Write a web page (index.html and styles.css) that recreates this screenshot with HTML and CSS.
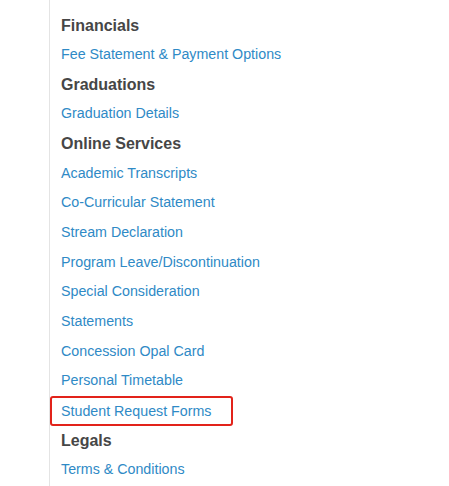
FILE: index.html
```html
<!DOCTYPE html>
<html>
<head>
<meta charset="utf-8">
<link rel="stylesheet" href="styles.css">
</head>
<body>
<div class="page">
  <nav class="sidebar">
    <div class="heading">Financials</div>
    <a class="link">Fee Statement &amp; Payment Options</a>
    <div class="heading">Graduations</div>
    <a class="link">Graduation Details</a>
    <div class="heading">Online Services</div>
    <a class="link">Academic Transcripts</a>
    <a class="link">Co-Curricular Statement</a>
    <a class="link">Stream Declaration</a>
    <a class="link">Program Leave/Discontinuation</a>
    <a class="link">Special Consideration</a>
    <a class="link">Statements</a>
    <a class="link">Concession Opal Card</a>
    <a class="link">Personal Timetable</a>
    <a class="link highlighted"><span class="box">Student Request Forms</span></a>
    <div class="heading">Legals</div>
    <a class="link">Terms &amp; Conditions</a>
  </nav>
</div>
</body>
</html>
```

FILE: styles.css
```css
html, body {
  margin: 0;
  padding: 0;
  background: #ffffff;
}
.page {
  width: 449px;
  height: 486px;
  overflow: hidden;
  padding-left: 49px;
  box-sizing: border-box;
}
.sidebar {
  border-left: 1px solid #e4e4e4;
  padding: 10.5px 0 20px 11px;
  display: flex;
  flex-direction: column;
  font-family: "Liberation Sans", Arial, sans-serif;
}
.heading, .link {
  height: 29.67px;
  line-height: 29.67px;
  white-space: nowrap;
}
.heading {
  font-size: 16px;
  font-weight: bold;
  color: #464646;
}
.link {
  font-size: 14.25px;
  color: #2f8ac6;
  text-decoration: none;
}
.highlighted {
  display: flex;
  align-items: center;
}
.box {
  margin-left: -11px;
  box-sizing: border-box;
  height: 30px;
  line-height: 26px;
  padding: 0 19px 0 9px;
  border: 2px solid #e2231a;
  border-radius: 3px;
}
```
